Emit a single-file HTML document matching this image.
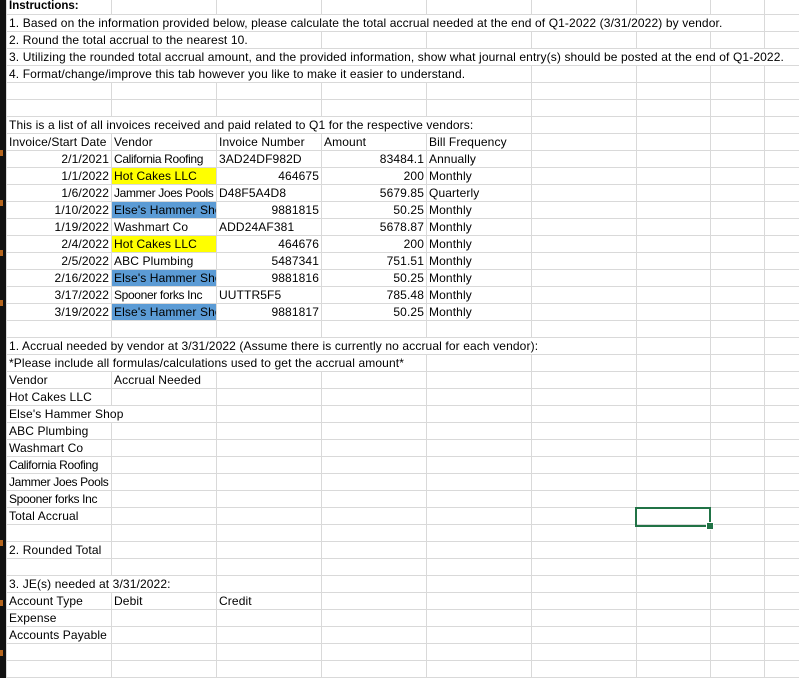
<!DOCTYPE html>
<html><head><meta charset="utf-8"><style>
html,body{margin:0;padding:0;background:#fff;width:799px;height:678px;overflow:hidden;position:relative}
.strip{position:absolute;left:0;top:0;width:6px;height:678px;background:#111}
.strip i{position:absolute;left:0;width:3px;height:6px;background:#b5651d}
table{position:absolute;left:6px;top:-2px;width:798px;border-collapse:collapse;table-layout:fixed;font-family:"Liberation Sans",Arial,sans-serif;font-size:12px;letter-spacing:0.12px;color:#000}
td{height:16px;padding:0 0 0 2px;border-right:1px solid #d9d9d9;border-bottom:1px solid #d9d9d9;border-left:1px solid #d9d9d9;white-space:nowrap;overflow:hidden;line-height:16px;vertical-align:bottom}
td.r{text-align:right;padding:0 2px 0 0}
td.n{letter-spacing:-0.35px}
.y{background:#ffff00}.b{background:#5b9bd5}
.bold{font-weight:bold;font-size:11.5px;letter-spacing:0}
.sel{position:absolute;left:635px;top:507px;width:72px;height:16px;border:2px solid #217346}
.sel:after{content:"";position:absolute;right:-5px;bottom:-5px;width:6px;height:6px;background:#217346;border:1px solid #fff}
</style></head><body>
<div class="strip"><i style="top:150px"></i><i style="top:200px"></i><i style="top:250px"></i><i style="top:300px"></i><i style="top:540px"></i><i style="top:600px"></i><i style="top:650px"></i></div>
<table>
<colgroup><col style="width:105px"><col style="width:105px"><col style="width:105px"><col style="width:105px"><col style="width:105px"><col style="width:105px"><col style="width:74px"><col style="width:54px"><col style="width:40px"></colgroup>
<tr><td class="bold">Instructions:</td><td></td><td></td><td></td><td></td><td></td><td></td><td></td><td></td></tr>
<tr><td colspan="8">1. Based on the information provided below, please calculate the total accrual needed at the end of Q1-2022 (3/31/2022) by vendor.</td><td></td></tr>
<tr><td colspan="3">2. Round the total accrual to the nearest 10.</td><td></td><td></td><td></td><td></td><td></td><td></td></tr>
<tr><td colspan="9">3. Utilizing the rounded total accrual amount, and the provided information, show what journal entry(s) should be posted at the end of Q1-2022.</td></tr>
<tr><td colspan="5">4. Format/change/improve this tab however you like to make it easier to understand.</td><td></td><td></td><td></td><td></td></tr>
<tr><td></td><td></td><td></td><td></td><td></td><td></td><td></td><td></td><td></td></tr>
<tr><td></td><td></td><td></td><td></td><td></td><td></td><td></td><td></td><td></td></tr>
<tr><td colspan="5">This is a list of all invoices received and paid related to Q1 for the respective vendors:</td><td></td><td></td><td></td><td></td></tr>
<tr><td>Invoice/Start Date</td><td>Vendor</td><td>Invoice Number</td><td>Amount</td><td>Bill Frequency</td><td></td><td></td><td></td><td></td></tr>
<tr><td class="r">2/1/2021</td><td class="n">California Roofing</td><td>3AD24DF982D</td><td class="r">83484.1</td><td>Annually</td><td></td><td></td><td></td><td></td></tr>
<tr><td class="r">1/1/2022</td><td class="y">Hot Cakes LLC</td><td class="r">464675</td><td class="r">200</td><td>Monthly</td><td></td><td></td><td></td><td></td></tr>
<tr><td class="r">1/6/2022</td><td class="n">Jammer Joes Pools</td><td>D48F5A4D8</td><td class="r">5679.85</td><td>Quarterly</td><td></td><td></td><td></td><td></td></tr>
<tr><td class="r">1/10/2022</td><td class="b">Else's Hammer Shop</td><td class="r">9881815</td><td class="r">50.25</td><td>Monthly</td><td></td><td></td><td></td><td></td></tr>
<tr><td class="r">1/19/2022</td><td>Washmart Co</td><td>ADD24AF381</td><td class="r">5678.87</td><td>Monthly</td><td></td><td></td><td></td><td></td></tr>
<tr><td class="r">2/4/2022</td><td class="y">Hot Cakes LLC</td><td class="r">464676</td><td class="r">200</td><td>Monthly</td><td></td><td></td><td></td><td></td></tr>
<tr><td class="r">2/5/2022</td><td>ABC Plumbing</td><td class="r">5487341</td><td class="r">751.51</td><td>Monthly</td><td></td><td></td><td></td><td></td></tr>
<tr><td class="r">2/16/2022</td><td class="b">Else's Hammer Shop</td><td class="r">9881816</td><td class="r">50.25</td><td>Monthly</td><td></td><td></td><td></td><td></td></tr>
<tr><td class="r">3/17/2022</td><td class="n">Spooner forks Inc</td><td>UUTTR5F5</td><td class="r">785.48</td><td>Monthly</td><td></td><td></td><td></td><td></td></tr>
<tr><td class="r">3/19/2022</td><td class="b">Else's Hammer Shop</td><td class="r">9881817</td><td class="r">50.25</td><td>Monthly</td><td></td><td></td><td></td><td></td></tr>
<tr><td></td><td></td><td></td><td></td><td></td><td></td><td></td><td></td><td></td></tr>
<tr><td colspan="6">1. Accrual needed by vendor at 3/31/2022 (Assume there is currently no accrual for each vendor):</td><td></td><td></td><td></td></tr>
<tr><td colspan="4">*Please include all formulas/calculations used to get the accrual amount*</td><td></td><td></td><td></td><td></td><td></td></tr>
<tr><td>Vendor</td><td>Accrual Needed</td><td></td><td></td><td></td><td></td><td></td><td></td><td></td></tr>
<tr><td>Hot Cakes LLC</td><td></td><td></td><td></td><td></td><td></td><td></td><td></td><td></td></tr>
<tr><td colspan="2">Else's Hammer Shop</td><td></td><td></td><td></td><td></td><td></td><td></td><td></td></tr>
<tr><td>ABC Plumbing</td><td></td><td></td><td></td><td></td><td></td><td></td><td></td><td></td></tr>
<tr><td>Washmart Co</td><td></td><td></td><td></td><td></td><td></td><td></td><td></td><td></td></tr>
<tr><td class="n">California Roofing</td><td></td><td></td><td></td><td></td><td></td><td></td><td></td><td></td></tr>
<tr><td class="n">Jammer Joes Pools</td><td></td><td></td><td></td><td></td><td></td><td></td><td></td><td></td></tr>
<tr><td class="n">Spooner forks Inc</td><td></td><td></td><td></td><td></td><td></td><td></td><td></td><td></td></tr>
<tr><td>Total Accrual</td><td></td><td></td><td></td><td></td><td></td><td></td><td></td><td></td></tr>
<tr><td></td><td></td><td></td><td></td><td></td><td></td><td></td><td></td><td></td></tr>
<tr><td>2. Rounded Total</td><td></td><td></td><td></td><td></td><td></td><td></td><td></td><td></td></tr>
<tr><td></td><td></td><td></td><td></td><td></td><td></td><td></td><td></td><td></td></tr>
<tr><td colspan="2">3. JE(s) needed at 3/31/2022:</td><td></td><td></td><td></td><td></td><td></td><td></td><td></td></tr>
<tr><td>Account Type</td><td>Debit</td><td>Credit</td><td></td><td></td><td></td><td></td><td></td><td></td></tr>
<tr><td>Expense</td><td></td><td></td><td></td><td></td><td></td><td></td><td></td><td></td></tr>
<tr><td>Accounts Payable</td><td></td><td></td><td></td><td></td><td></td><td></td><td></td><td></td></tr>
<tr><td></td><td></td><td></td><td></td><td></td><td></td><td></td><td></td><td></td></tr>
<tr><td></td><td></td><td></td><td></td><td></td><td></td><td></td><td></td><td></td></tr>
</table>
<div class="sel"></div>
</body></html>
